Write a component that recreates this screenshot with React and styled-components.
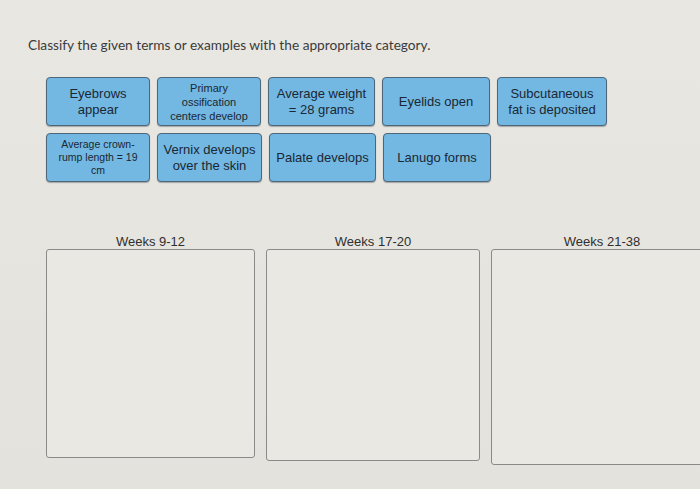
import React from "react";
import styled, { createGlobalStyle } from "styled-components";

const GlobalStyle = createGlobalStyle`
  html, body {
    margin: 0;
    padding: 0;
    background: #e7e5df;
  }
  body {
    overflow: hidden;
  }
`;

const Page = styled.div`
  width: 700px;
  height: 489px;
  box-sizing: border-box;
  padding: 36px 0 0 0;
  background: linear-gradient(180deg, #e9e7e2 0%, #e6e4de 60%, #e4e2dc 100%);
  overflow: hidden;
  font-family: "Liberation Sans", Arial, sans-serif;
`;

const Prompt = styled.p`
  margin: 0 0 0 28px;
  font-family: Lato, "Open Sans", sans-serif;
  font-size: 13.7px;
  color: #3b3b3b;
  line-height: 18px;
`;

const Bank = styled.div`
  display: flex;
  flex-wrap: wrap;
  width: 580px;
  column-gap: 7px;
  row-gap: 7px;
  margin: 23px 0 0 46px;
`;

const Card = styled.div`
  width: ${(p) => p.$w || 105}px;
  height: 49px;
  box-sizing: border-box;
  display: flex;
  align-items: center;
  justify-content: center;
  text-align: center;
  padding: 0 ${(p) => p.$pad || 4}px;
  background: #72b8e2;
  border: 1px solid #4e6679;
  border-radius: 4px;
  box-shadow: 0 1px 1px rgba(40, 50, 60, 0.35);
  color: #1a2734;
  font-size: ${(p) => p.$fs || 13}px;
  line-height: ${(p) => p.$lh || 16}px;
`;

const Zones = styled.div`
  display: flex;
  align-items: flex-start;
  gap: 11px;
  margin: 53px 0 0 46px;
`;

const Zone = styled.div`
  display: flex;
  flex-direction: column;
  align-items: center;
  flex: none;
  width: ${(p) => p.$w}px;
`;

const ZoneLabel = styled.div`
  font-size: 13px;
  color: #2f2f2f;
  line-height: 14px;
`;

const DropBox = styled.div`
  width: 100%;
  height: ${(p) => p.$h}px;
  box-sizing: border-box;
  border: 1.5px solid #8a8a88;
  border-radius: 3px;
  background: #e9e8e3;
`;

const cards = [
  { text: "Eyebrows appear", w: 104 },
  { text: "Primary ossification centers develop", w: 104, fs: 11, lh: 14, pad: 9 },
  { text: "Average weight = 28 grams", w: 107 },
  { text: "Eyelids open", w: 108 },
  { text: "Subcutaneous fat is deposited", w: 110 },
  { text: "Average crown-rump length = 19 cm", w: 104, fs: 10.5, lh: 13 },
  { text: "Vernix develops over the skin", w: 105 },
  { text: "Palate develops", w: 107 },
  { text: "Lanugo forms", w: 108 },
];

const zones = [
  { label: "Weeks 9-12", w: 209, h: 209 },
  { label: "Weeks 17-20", w: 214, h: 212 },
  { label: "Weeks 21-38", w: 222, h: 216 },
];

export default function App() {
  return (
    <>
      <GlobalStyle />
      <Page>
        <Prompt>
          Classify the given terms or examples with the appropriate category.
        </Prompt>
        <Bank>
          {cards.map((c) => (
            <Card key={c.text} $w={c.w} $fs={c.fs} $lh={c.lh} $pad={c.pad}>
              {c.text}
            </Card>
          ))}
        </Bank>
        <Zones>
          {zones.map((z) => (
            <Zone key={z.label} $w={z.w}>
              <ZoneLabel>{z.label}</ZoneLabel>
              <DropBox $h={z.h} />
            </Zone>
          ))}
        </Zones>
      </Page>
    </>
  );
}
